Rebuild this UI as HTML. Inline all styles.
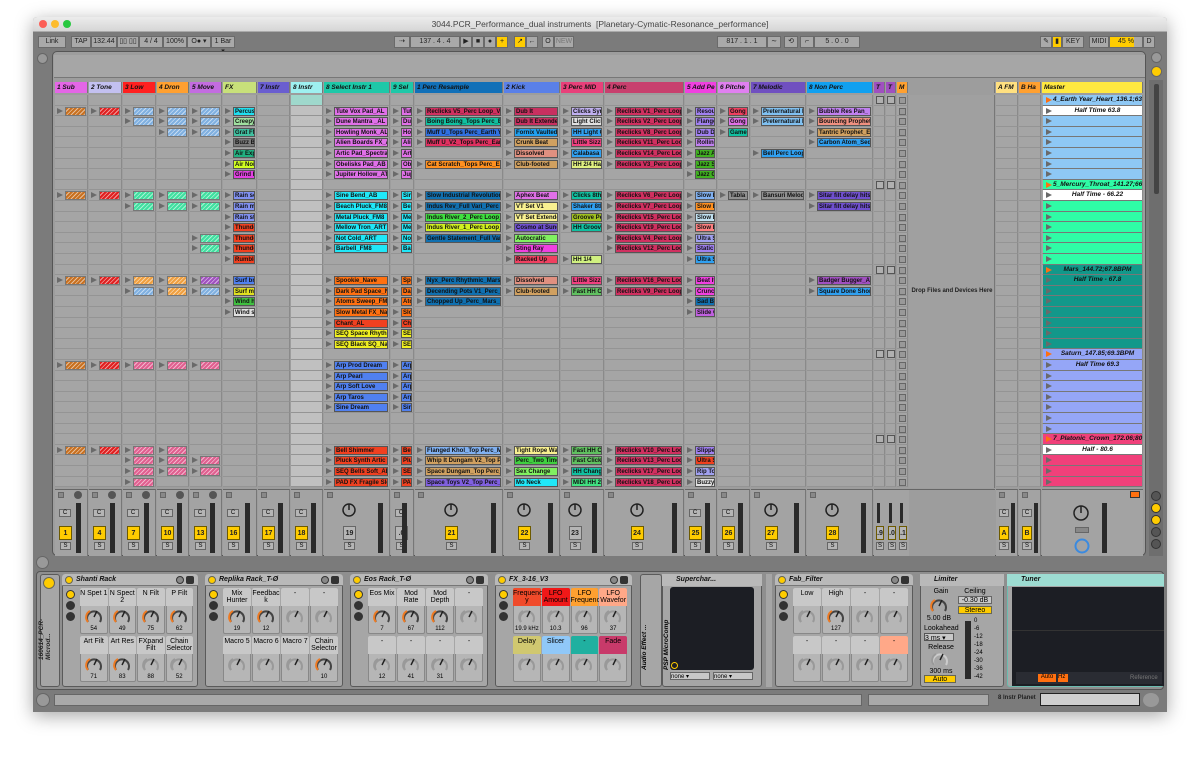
<!DOCTYPE html>
<html><head><meta charset="utf-8">
<style>
*{box-sizing:border-box;margin:0;padding:0}
body{width:1200px;height:759px;background:#fff;font-family:"Liberation Sans",sans-serif;font-size:7px;position:relative;overflow:hidden}
.a{position:absolute}
#win{left:33px;top:17px;width:1134px;height:695px;background:#7b7b7b;box-shadow:0 4px 18px rgba(0,0,0,.35);border-radius:4px 4px 0 0}
.tb{background:#a9a9a9;border:1px solid #6a6a6a;color:#222;font-size:7px;line-height:10px;text-align:center}
.hd{height:11px;font-weight:bold;font-style:italic;font-size:6.5px;line-height:11px;padding-left:2px;color:#111;white-space:nowrap;overflow:hidden}
.cell{background:#a5a5a5;border-right:1px solid #8a8a8a;border-bottom:1px solid #949494}
.tri{width:0;height:0;border-left:6px solid #6a6a6a;border-top:3.5px solid transparent;border-bottom:3.5px solid transparent}
.clip{height:9px;font-size:6px;font-weight:bold;line-height:9px;color:#111;white-space:nowrap;overflow:hidden;border:1px solid #555;padding-left:1px}
.yb{background:#ffcc00;border:1px solid #6d5a00;font-weight:bold;font-size:7px;text-align:center;line-height:13px;color:#222}
.sm{background:#b5b5b5;border:1px solid #666;font-size:6px;text-align:center;line-height:7px}
.meter{background:#2a2a2a}
.dev{background:#a6a6a6;border:1px solid #5a5a5a;border-radius:3px}
.dt{font-weight:bold;font-style:italic;font-size:7px;line-height:11px;padding-left:14px;color:#111}
.mac{background:#b6b6b6;border:1px solid #888;border-radius:2px;font-size:6px;text-align:center;color:#222}
</style></head><body>
<div id="win" class="a"></div>
<div class="a" style="left:33px;top:17px;width:1134px;height:15px;background:linear-gradient(#ececec,#d6d6d6);border-radius:4px 4px 0 0;border-bottom:1px solid #aaa"></div>
<div class="a" style="left:39px;top:20px;width:8px;height:8px;border-radius:50%;background:#fc5f57"></div>
<div class="a" style="left:51px;top:20px;width:8px;height:8px;border-radius:50%;background:#fdbc2e"></div>
<div class="a" style="left:63px;top:20px;width:8px;height:8px;border-radius:50%;background:#28c840"></div>
<div class="a" style="left:0;top:19px;width:1200px;text-align:center;font-size:8.5px;color:#444">3044.PCR_Performance_dual instruments&nbsp; [Planetary-Cymatic-Resonance_performance]</div>
<div class="a tb" style="left:38px;top:36px;width:28px;height:12px">Link</div>
<div class="a tb" style="left:71px;top:36px;width:20px;height:12px">TAP</div>
<div class="a tb" style="left:91px;top:36px;width:26px;height:12px">132.44</div>
<div class="a tb" style="left:117px;top:36px;width:22px;height:12px">▯▯ ▯▯</div>
<div class="a tb" style="left:139px;top:36px;width:24px;height:12px">4 / 4</div>
<div class="a tb" style="left:163px;top:36px;width:24px;height:12px">100%</div>
<div class="a tb" style="left:187px;top:36px;width:24px;height:12px">O● ▾</div>
<div class="a tb" style="left:211px;top:36px;width:24px;height:12px">1 Bar ▾</div>
<div class="a tb" style="left:394px;top:36px;width:16px;height:12px">⇢</div>
<div class="a tb" style="left:410px;top:36px;width:50px;height:12px">137 .  4 .  4</div>
<div class="a tb" style="left:460px;top:36px;width:12px;height:12px">▶</div>
<div class="a tb" style="left:472px;top:36px;width:12px;height:12px">■</div>
<div class="a tb" style="left:484px;top:36px;width:12px;height:12px">●</div>
<div class="a tb" style="left:496px;top:36px;width:12px;height:12px;background:#ffcc00">+</div>
<div class="a tb" style="left:514px;top:36px;width:12px;height:12px;background:#ffcc00">↗</div>
<div class="a tb" style="left:526px;top:36px;width:12px;height:12px">←</div>
<div class="a tb" style="left:542px;top:36px;width:12px;height:12px">O</div>
<div class="a tb" style="left:554px;top:36px;width:20px;height:12px;color:#777">NEW</div>
<div class="a tb" style="left:717px;top:36px;width:50px;height:12px">817 .  1 .  1</div>
<div class="a tb" style="left:767px;top:36px;width:14px;height:12px">∼</div>
<div class="a tb" style="left:784px;top:36px;width:14px;height:12px">⟲</div>
<div class="a tb" style="left:800px;top:36px;width:14px;height:12px">⌐</div>
<div class="a tb" style="left:814px;top:36px;width:46px;height:12px">5 .  0 .  0</div>
<div class="a tb" style="left:1040px;top:36px;width:12px;height:12px">✎</div>
<div class="a tb" style="left:1052px;top:36px;width:10px;height:12px;background:#ffcc00">▮</div>
<div class="a tb" style="left:1062px;top:36px;width:22px;height:12px">KEY</div>
<div class="a tb" style="left:1089px;top:36px;width:20px;height:12px">MIDI</div>
<div class="a tb" style="left:1109px;top:36px;width:34px;height:12px;background:linear-gradient(90deg,#ffcc00 75%,#a9a9a9 75%)">45 %</div>
<div class="a tb" style="left:1143px;top:36px;width:12px;height:12px">D</div>
<div class="a" style="left:37px;top:53px;width:11px;height:11px;border-radius:50%;background:#999;border:1px solid #666"></div>
<div class="a" style="left:1151px;top:52px;width:11px;height:11px;border-radius:50%;background:#999;border:1px solid #666"></div>
<div class="a" style="left:1151px;top:66px;width:11px;height:11px;border-radius:50%;background:#ffcc00;border:1px solid #666"></div>
<div class="a" style="left:52px;top:51px;width:1094px;height:505px;background:#9d9d9d;border:1px solid #555;border-radius:5px"></div>
<div class="a" style="left:54px;top:55px;width:1091px;height:23px;background:#a6a6a6;border-bottom:1px solid #777"></div>
<div class="a" style="left:1149px;top:80px;width:14px;height:476px;background:#6e6e6e"></div>
<div class="a" style="left:1154px;top:84px;width:5px;height:110px;background:#444;border-radius:2px"></div>
<div id="grid"></div>
<div class="a" style="left:36px;top:571px;width:1128px;height:119px;background:#8f8f8f;border:1px solid #555;border-radius:4px"></div>
<div id="devs"></div>
<div class="a" style="left:36px;top:693px;width:14px;height:14px;border-radius:50%;background:#999;border:1px solid #666"></div>
<div class="a" style="left:54px;top:694px;width:808px;height:12px;background:#a9a9a9;border:1px solid #666"></div>
<div class="a" style="left:868px;top:694px;width:121px;height:12px;background:#a9a9a9;border:1px solid #666"></div>
<div class="a" style="left:998px;top:695px;font-size:6px;font-weight:bold;color:#222">8 Instr Planet</div>
<div class="a" style="left:1040px;top:693px;width:100px;height:13px;background:#cfcfcf;border:1px solid #222"></div>
<div class="a" style="left:1143px;top:693px;width:16px;height:14px;border-radius:50%;background:#999"></div>
<script>
var G=document.getElementById('grid'),h='';
function A(x,y,w,hh,st,cls,t){h+='<div class="a '+(cls||'')+'" style="left:'+x+'px;top:'+y+'px;width:'+w+'px;height:'+hh+'px;'+(st||'')+'">'+(t||'')+'</div>';}
var cols=[[55,33,'#e466e6','1 Sub'],[89,33,'#c3c0f0','2 Tone'],[123,33,'#ff2020','3 Low'],[157,32,'#ffa030','4 Dron'],[190,32,'#c36ce0','5 Move'],[223,34,'#c8e07a','FX'],[258,32,'#6a5ed0','7 Instr'],[291,32,'#9ef0f0','8 Instr'],[324,66,'#1ec8a8','8 Select Instr 1'],[391,23,'#1ec8a8','9 Sel'],[415,88,'#1170b8','1 Perc Resample'],[504,56,'#5a80e8','2 Kick'],[561,43,'#e8407a','3 Perc MID'],[605,79,'#c8406e','4 Perc'],[685,32,'#f040e0','5 Add Pe'],[718,32,'#e080f0','6 Pitche'],[751,55,'#7050c0','7 Melodic'],[807,66,'#10a0f0','8 Non Perc'],[874,11,'#a050c0','T'],[886,10,'#a050c0','T'],[897,11,'#ffa030','M'],[909,86,'#9d9d9d',''],[996,22,'#ffe080','A FM'],[1019,22,'#ffa030','B Ha'],[1042,101,'#ffe840','Master']];
var RY=function(r){return 95+r*10.6};
cols.forEach(function(c,i){
 A(c[0],82,c[1],11,'background:'+c[2]+';border-right:1px solid #777','hd',c[3]);
 if(i==21){A(c[0],95,c[1],393,'background:#a0a0a0;border-right:1px solid #777');return;}
 for(var r=0;r<37;r++){var bg=(i==7)?(r==0?'#9fd8cc':'#c0c0c0'):'#a5a5a5';A(c[0],RY(r),c[1],10.6,'background:'+bg,'cell');}
});
A(910,288,84,8,'text-align:center;font-size:6px;font-weight:bold;color:#222','','Drop Files and Devices Here');
function hatch(c){return 'background:repeating-linear-gradient(135deg,'+c+' 0 2px,rgba(255,255,255,.55) 2px 3px),'+c+';border-color:#777'}
function clip(ci,r,col,t,hat){var c=cols[ci],y=RY(r);A(c[0]+2,y+2,0,0,'','tri');A(c[0]+10,y+1,c[1]-12,9,hat?hatch(col):'background:'+col,'clip',t||'');}
var O='#c87020',R='#e02020',B='#80b0e0',Gn='#40e0a0',P='#e06090';
[1,9,17,25,33].forEach(function(r){clip(0,r,O,'',1);clip(1,r,R,'',1)});
[[1,B],[2,B],[9,Gn],[10,Gn],[17,'#f0a040'],[18,B],[25,P],[33,P],[34,P],[35,P],[36,P]].forEach(function(a){clip(2,a[0],a[1],'',1)});
[[1,B],[2,B],[3,B],[9,Gn],[10,Gn],[17,'#f0a040'],[18,'#f0a040'],[25,P],[33,P],[34,P],[35,P]].forEach(function(a){clip(3,a[0],a[1],'',1)});
[[1,B],[2,B],[3,B],[9,Gn],[10,Gn],[13,Gn],[14,Gn],[17,'#a050c0'],[18,B],[25,P],[34,P],[35,P]].forEach(function(a){clip(4,a[0],a[1],'',1)});
[[1,'#20e0f0','Percuss'],[2,'#a0e0a0','Creepy'],[3,'#40c0a0','Grat FM'],[4,'#7a7a7a','Buzz By'],[5,'#20b080','Air Exp'],[6,'#d0ff20','Air Nois'],[7,'#e040e0','Grind R'],[9,'#8090f0','Rain so'],[10,'#8090f0','Rain mo'],[11,'#8090f0','Rain sto'],[12,'#f04020','Thunde'],[13,'#f04020','Thunde'],[14,'#f04020','Thunde'],[15,'#f04020','Rumble'],[17,'#5080f0','Surf bri'],[18,'#e0e020','Surf mo'],[19,'#40c040','Wind ho'],[20,'#e0e0e0','Wind sc']].forEach(function(a){clip(5,a[0],a[1],a[2])});
var s8=[[1,'#e070e8','Tute Vox Pad_AL'],[2,'#e070e8','Dune Mantra _AL'],[3,'#e070e8','Howling Monk_AL'],[4,'#e070e8','Alien Boards FX_AB'],[5,'#e070e8','Artic Pad_Spectral'],[6,'#e070e8','Obelisks Pad_AB'],[7,'#e070e8','Jupiter Hollow_AT'],[9,'#20e8f8','Sine Bend_AB'],[10,'#20e8f8','Beach Pluck_FM8'],[11,'#20e8f8','Metal Pluck_FM8'],[12,'#20e8f8','Mellow Tron_ART'],[13,'#20e8f8','Not Cold_ART'],[14,'#20e8f8','Barbell_FM8'],[17,'#ff7010','Spookie_Nave'],[18,'#ff7010','Dark Pad Space_Nav'],[19,'#ff7010','Atoms Sweep_FM8'],[20,'#ff7010','Slow Metal FX_Nava'],[21,'#f04020','Chant_AL'],[22,'#f0f020','SEQ Space Rhythmi'],[23,'#f0f020','SEQ Black SQ_Nave'],[25,'#5080f0','Arp Prod Dream'],[26,'#5080f0','Arp Pearl'],[27,'#5080f0','Arp Soft Love'],[28,'#5080f0','Arp Taros'],[29,'#5080f0','Sine Dream'],[33,'#f04020','Bell Shimmer'],[34,'#f04020','Pluck Synth Artic'],[35,'#f04020','SEQ Bells Soft_AB'],[36,'#f04020','PAD FX Fragile Slow']];
s8.forEach(function(a){clip(8,a[0],a[1],a[2]);clip(9,a[0],a[1],a[2])});
[[1,'#d03060','Reclicks V5_Perc Loop_Ven'],[2,'#10c0a0','Boing Boing_Tops Perc_Ear'],[3,'#3070e0','Muff U_Tops Perc_Earth Yea'],[4,'#e03060','Muff U_V2_Tops Perc_Earth'],[6,'#ff9020','Cat Scratch_Tops Perc_Eart'],[9,'#1070b0','Slow Industrial Revolution_E'],[10,'#1070b0','Indus Rev_Full Vari_Perc Lo'],[11,'#40e040','Indus River_2_Perc Loop_Ea'],[12,'#d0f020','Indus River_1_Perc Loop_Ea'],[13,'#1070b0','Gentle Statement_Full Vari_'],[17,'#1070b0','Nyx_Perc Rhythmic_Mars_6'],[18,'#1070b0','Decending Pots V1_Perc_Ma'],[19,'#1070b0','Chopped Up_Perc_Mars_67.'],[33,'#80b0f0','Flanged Khol_Top Perc_Mod'],[34,'#d0a060','Whip It Dungam V2_Top Perc'],[35,'#d0a060','Space Dungam_Top Perc_Ve'],[36,'#8060e0','Space Toys V2_Top Perc_Ve']].forEach(function(a){clip(10,a[0],a[1],a[2])});
[[1,'#c83060','Dub It'],[2,'#c83060','Dub It Extended'],[3,'#20a0f0','Fornix Vaulted'],[4,'#d0a060','Crunk Beat'],[5,'#e09080','Dissolved'],[6,'#d0a060','Club-footed'],[9,'#e070e8','Aphex Beat'],[10,'#f8f090','VT Set V1'],[11,'#f8f090','VT Set Extended'],[12,'#7050d0','Cosmo at Sunde'],[13,'#80f060','Autocratic'],[14,'#f040e0','Sting Ray'],[15,'#f04060','Racked Up'],[17,'#e09080','Dissolved'],[18,'#d0a060','Club-footed'],[33,'#f8f090','Tight Rope Walk'],[34,'#40d040','Perc_Two Times'],[35,'#80f060','Sex Change'],[36,'#20e8f8','Mo Neck']].forEach(function(a){clip(11,a[0],a[1],a[2])});
[[1,'#c0b0f0','Clicks Sync'],[2,'#e0e0e0','Light Clicks'],[3,'#30a0f0','HH Light Gr'],[4,'#f04080','Little Sizzle'],[5,'#30a0f0','Calabasa D'],[6,'#e0f080','HH 2/4 Half'],[9,'#10c0a0','Clicks 8th N'],[10,'#30a0f0','Shaker 8the'],[11,'#a0c020','Groove Perc'],[12,'#10c0a0','HH Groove 2'],[15,'#d0f080','HH 1/4'],[17,'#f04080','Little Sizzle'],[18,'#60c060','Fast HH Clic'],[33,'#60c060','Fast HH Clic'],[34,'#60c060','Fast Clicks'],[35,'#10c0a0','HH Chang'],[36,'#40e080','MIDI HH 2/4']].forEach(function(a){clip(12,a[0],a[1],a[2])});
[[1,'V1'],[2,'V2'],[3,'V8'],[4,'V11'],[5,'V14'],[6,'V3'],[9,'V6'],[10,'V7'],[11,'V15'],[12,'V19'],[13,'V4'],[14,'V12'],[17,'V16'],[18,'V9'],[33,'V10'],[34,'V13'],[35,'V17'],[36,'V18']].forEach(function(a){clip(13,a[0],'#d03060','Reclicks '+a[1]+'_Perc Loop_')});
[[1,'#a080f0','Resoun'],[2,'#a080f0','Flange'],[3,'#a080f0','Dub Du'],[4,'#c080f0','Rolling'],[5,'#40b020','Jazz As'],[6,'#40b020','Jazz Sy'],[7,'#40b020','Jazz Gli'],[9,'#80b0f0','Slow Br'],[10,'#ff9020','Slow Br'],[11,'#c0e0f0','Slow Br'],[12,'#ff8080','Slow Br'],[13,'#a0a0f0','Ultra St'],[14,'#a080f0','Static'],[15,'#30a0f0','Ultra St'],[17,'#f040e0','Beat It'],[18,'#f040e0','Crunch'],[19,'#1070b0','Sad Bra'],[20,'#c060e0','Slide O'],[33,'#a080f0','Slipper'],[34,'#f04020','Ultra St'],[35,'#a0a0f0','Rip Tor'],[36,'#e0e0e0','Buzzy C']].forEach(function(a){clip(14,a[0],a[1],a[2])});
[[1,'#f04060','Gong R'],[2,'#e070e8','Gong S'],[3,'#10c0a0','Gamela'],[9,'#909090','Tabla F']].forEach(function(a){clip(15,a[0],a[1],a[2])});
[[1,'#80c0f0','Preternatural No'],[2,'#80c0f0','Preternatural No'],[5,'#30a0f0','Bell Perc Loop'],[9,'#909090','Bansuri Melodic']].forEach(function(a){clip(16,a[0],a[1],a[2])});
[[1,'#c080f0','Bubble Res Pan_ Dr'],[2,'#f09080','Bouncing Prophet S'],[3,'#d0a060','Tantric Prophet_Ear'],[4,'#30a0f0','Carbon Atom_Seq D'],[9,'#7050d0','Sitar filt delay hits V'],[10,'#7050d0','Sitar filt delay hits V'],[17,'#a050c0','Badger Bugger_Arp'],[18,'#30a0f0','Square Done Short']].forEach(function(a){clip(17,a[0],a[1],a[2])});
for(var r=0;r<37;r++){var y=RY(r);A(899,y+2,7,7,'background:#999;border:1px solid #666');
 if(r%8==0){A(876,y+1,8,8,'background:#b0b0b0;border:1px solid #555');A(887,y+1,8,8,'background:#b0b0b0;border:1px solid #555');}}
var sc=[['#8ec8f5','4_Earth Year_Heart_136.1;63','Half Ttime 63.8'],['#2ffca6','5_Mercury_Throat_141.27;66','Half Time - 66.22'],['#12988a','Mars_144.72;67.8BPM','Half Time - 67.8'],['#95a6f7','Saturn_147.85;69.3BPM','Half Time 69.3'],['#f0407a','7_Platonic_Crown_172.06;80','Half - 80.6']];
for(var r=0;r<37;r++){var s=sc[Math.floor(r/8)],y=RY(r),bg=s[0],t='';if(r%8==0)t=s[1];if(r%8==1){t=s[2];if(r<16||r>=32)bg='#fff';}
 A(1043,y,99,10.6,'background:'+bg+';border-bottom:1px solid #777;font-size:6.5px;font-weight:bold;font-style:italic;line-height:10px;padding-left:10px;text-align:center;color:#111','',t);
 A(1046,y+2,0,0,r%8==0?'border-left-color:#ff7010':'','tri');}
var my=489;
cols.forEach(function(c,i){if(i>=18&&i<=20||i==21)return;
 A(c[0],my,c[1],67,'background:#a3a3a3;border-right:1px solid #777;border-top:1px solid #666');
 A(c[0]+3,my+3,6,6,'background:#888;border:1px solid #666');});
A(874,my,35,67,'background:#a3a3a3;border-top:1px solid #666');A(909,my,86,67,'background:#9d9d9d;border-top:1px solid #666');
var nums=['1','4','7','10','13','16','17','18','19','.0','21','22','23','24','25','26','27','28'];
cols.forEach(function(c,i){if(i>17)return;var big=c[1]>40;var cx=c[0]+(big?c[1]/2-14:4);
 if(i<5){h+='<svg class="a" style="left:'+(c[0]+18)+'px;top:'+(my+1)+'px" width="10" height="10"><circle cx="5" cy="5" r="4" fill="#555"/></svg>';}
 if(big){h+='<svg class="a" style="left:'+(cx-2)+'px;top:'+(my+12)+'px" width="16" height="16"><circle cx="8" cy="9" r="6" fill="none" stroke="#222" stroke-width="1.5"/><line x1="8" y1="9" x2="8" y2="3" stroke="#222" stroke-width="1.5"/></svg>';}
 else A(cx,my+20,12,8,'','sm','C');
 var yb=(i<8||[10,11,13,14,15,16,17].indexOf(i)>=0);
 A(cx,my+37,13,14,yb?'':'background:#b5b5b5;border-color:#666','yb',nums[i]);
 A(cx+1,my+53,11,8,'','sm','S');
 A(c[0]+c[1]-12,my+14,5,50,'','meter');});
[1,2].forEach(function(k){var c=cols[21+k];A(c[0]+3,my+20,10,8,'','sm','C');A(c[0]+3,my+37,10,14,'','yb',k==1?'A':'B');A(c[0]+3,my+53,10,8,'','sm','S');A(c[0]+15,my+14,4,50,'','meter');});
[874,886,897].forEach(function(x,k){A(x+2,my+37,8,14,'background:#b5b5b5','yb',['.9','.0','.1'][k]);A(x+3,my+14,3,20,'','meter');A(x+2,my+53,8,8,'','sm','S')});
A(1042,my,101,67,'background:#a3a3a3;border-top:1px solid #666');
A(1130,my+2,10,7,'background:#ff7010;border:1px solid #333');
h+='<svg class="a" style="left:1072px;top:'+(my+14)+'px" width="18" height="18"><circle cx="9" cy="10" r="7" fill="none" stroke="#222" stroke-width="1.5"/><line x1="9" y1="10" x2="9" y2="3" stroke="#222" stroke-width="1.5"/></svg>';
A(1075,my+38,14,6,'background:#888;border:1px solid #666');
h+='<svg class="a" style="left:1073px;top:'+(my+48)+'px" width="18" height="18"><circle cx="9" cy="9" r="6.5" fill="none" stroke="#3a8ae0" stroke-width="2"/></svg>';
A(1102,my+14,5,50,'','meter');
A(36,556,13,13,'border-radius:50%;background:#999;border:1px solid #666');
[0,1,2,3,4].forEach(function(k){A(1151,my+2+k*12,10,10,'border-radius:50%;background:'+(k==1||k==2?'#ffcc00':'#555')+';border:1px solid #333')});
G.innerHTML=h;
h='';
A(40,574,20,113,'','dev');A(43,577,12,12,'border-radius:50%;background:#ffcc00;border:1px solid #665');
A(38,600,24,60,'writing-mode:vertical-rl;transform:rotate(180deg);font-size:6.5px;font-weight:bold;font-style:italic;color:#222','','160614_PCR-Microd...');
function knob(x,y,col,arc){return '<svg class="a" style="left:'+x+'px;top:'+y+'px" width="20" height="20"><path d="M4 15 A7 7 0 1 1 16 15" fill="none" stroke="'+(arc||'#bbb')+'" stroke-width="2"/><path d="M4 15 A7 7 0 0 1 6 4" fill="none" stroke="'+col+'" stroke-width="2"/><line x1="10" y1="10" x2="13" y2="4" stroke="#222" stroke-width="1.5"/></svg>';}
function rack(x,w,title,labels,vals,cols2){
 A(x,574,w,113,'','dev');A(x,574,w,12,'background:#b9b9b9;border-radius:3px 3px 0 0;border-bottom:1px solid #777','dt',title);
 A(x+3,576,8,8,'border-radius:50%;background:#ffcc00;border:1px solid #665');
 A(x+w-22,576,8,8,'border-radius:50%;background:#888;border:1px solid #333');A(x+w-12,576,8,8,'background:#333;border-radius:2px');
 for(var i=0;i<8;i++){var cx=x+18+(i%4)*((w-22)/4),cy=i<4?588:636,mw=(w-26)/4;
  A(cx,cy,mw,46,'','mac','');A(cx,cy,mw,18,'background:'+(cols2&&cols2[i]||'#c8c8c8')+';border-radius:2px 2px 0 0;padding-top:2px;line-height:7px;text-align:center','',labels[i]);
  h+=knob(cx+mw/2-10,cy+19,vals[i][1]?'#ee7a22':'#999',vals[i][1]?'#444':'#999');
  A(cx,cy+38,mw,7,'text-align:center;font-size:6px','',vals[i][0]);}
 [0,1,2].forEach(function(k){A(x+4,590+k*11,9,9,'border-radius:50%;background:'+(k==0?'#ffcc00':'#333')+';border:1px solid #333')});}
rack(62,136,'Shanti Rack',['N Spet 1','N Spect 2','N Filt','P Filt','Art Filt','Art Res','FXpand Filt','Chain Selector'],[[54,1],[49,1],[75,1],[62,1],[71,1],[83,1],[88,0],[52,0]]);
rack(205,138,'Replika Rack_T-Ø',['Mix Hunter','Feedbac k','-','-','Macro 5','Macro 6','Macro 7','Chain Selector'],[[19,1],[12,1],[0,0],[0,0],[0,0],[0,0],[0,0],[10,1]]);
rack(350,138,'Eos Rack_T-Ø',['Eos Mix','Mod Rate','Mod Depth','-','-','-','-','-'],[[7,1],[67,1],[112,1],[0,0],[12,0],[41,0],[31,0],[0,0]]);
rack(495,137,'FX_3-16_V3',['Frequenc y','LFO Amount','LFO Frequenc','LFO Wavefor','Delay','Slicer','-','Fade'],[['19.9 kHz',0],['10.3',0],[96,0],[37,0],[0,0],[0,0],[0,0],[0,0]],['#f04a2a','#f01818','#ffa030','#ffa888','#d0c870','#90c8f8','#20b0a0','#c83a6a']);
A(640,574,22,113,'','dev');A(662,574,100,113,'','dev');A(662,574,100,12,'background:#b9b9b9','dt','Superchar...');
A(641,600,20,70,'writing-mode:vertical-rl;transform:rotate(180deg);font-size:6.5px;font-weight:bold;font-style:italic','','Audio Effect ...');
A(663,600,18,70,'writing-mode:vertical-rl;transform:rotate(180deg);font-size:6.5px;font-weight:bold;font-style:italic','','PSP MicroComp');
A(670,587,84,83,'background:#1c1e24;border-radius:3px');A(671,662,7,7,'border-radius:50%;border:1.5px solid #ffcc00');
A(670,672,40,8,'background:#c8c8c8;border:1px solid #666;font-size:6px','','none ▾');A(713,672,40,8,'background:#c8c8c8;border:1px solid #666;font-size:6px','','none ▾');
A(766,574,6,113,'background:#a6a6a6');
rack(775,138,'Fab_Filter',['Low','High','-','-','-','-','-','-'],[[0,0],[127,1],[0,0],[0,0],[0,0],[0,0],[0,0],[0,0]],[0,0,0,0,0,0,0,'#ffa888']);
A(920,574,84,113,'','dev');A(920,574,84,12,'background:#b9b9b9','dt','Limiter');
A(926,588,30,8,'text-align:center','','Gain');h+=knob(929,596,'#ee7a22','#444');A(922,615,34,7,'text-align:center','','5.00 dB');
A(958,588,34,8,'text-align:center','','Ceiling');A(958,596,34,8,'background:#c8c8c8;border:1px solid #666;text-align:center','','-0.30 dB');A(958,606,34,8,'background:#ffcc00;border:1px solid #665;text-align:center','','Stereo');
A(924,625,34,8,'','','Lookahead');A(924,633,30,8,'background:#c8c8c8;border:1px solid #555','','3 ms ▾');A(924,644,34,8,'text-align:center','','Release');h+=knob(930,650,'#999','#ccc');A(924,668,34,7,'text-align:center','','300 ms');A(924,675,32,8,'background:#ffcc00;border:1px solid #665;text-align:center','','Auto');
A(965,621,6,58,'','meter');['0','-6','-12','-18','-24','-30','-36','-42'].forEach(function(t,k){A(974,618+k*8,20,7,'font-size:6px','',t)});
A(1007,574,157,113,'background:#a6a6a6;border:1px solid #6bbcb0;border-radius:3px');A(1007,574,157,12,'background:#9ddcd2','dt','Tuner');
A(1021,590,22,80,'writing-mode:vertical-rl;transform:rotate(180deg);font-size:6.5px;font-weight:bold;font-style:italic','','Tuner');
A(1012,587,152,99,'background:#1c1e24');A(1012,630,152,1,'background:#333');A(1016,672,146,12,'background:#2a2c33');
A(1038,674,18,8,'background:#ff7010;font-size:6px;text-align:center','','Auto');A(1058,674,10,8,'background:#ff7010;font-size:6px','','Hz');A(1130,675,30,7,'color:#777;font-size:6px','','Reference');
document.getElementById('devs').innerHTML=h;
</script>
</body></html>
